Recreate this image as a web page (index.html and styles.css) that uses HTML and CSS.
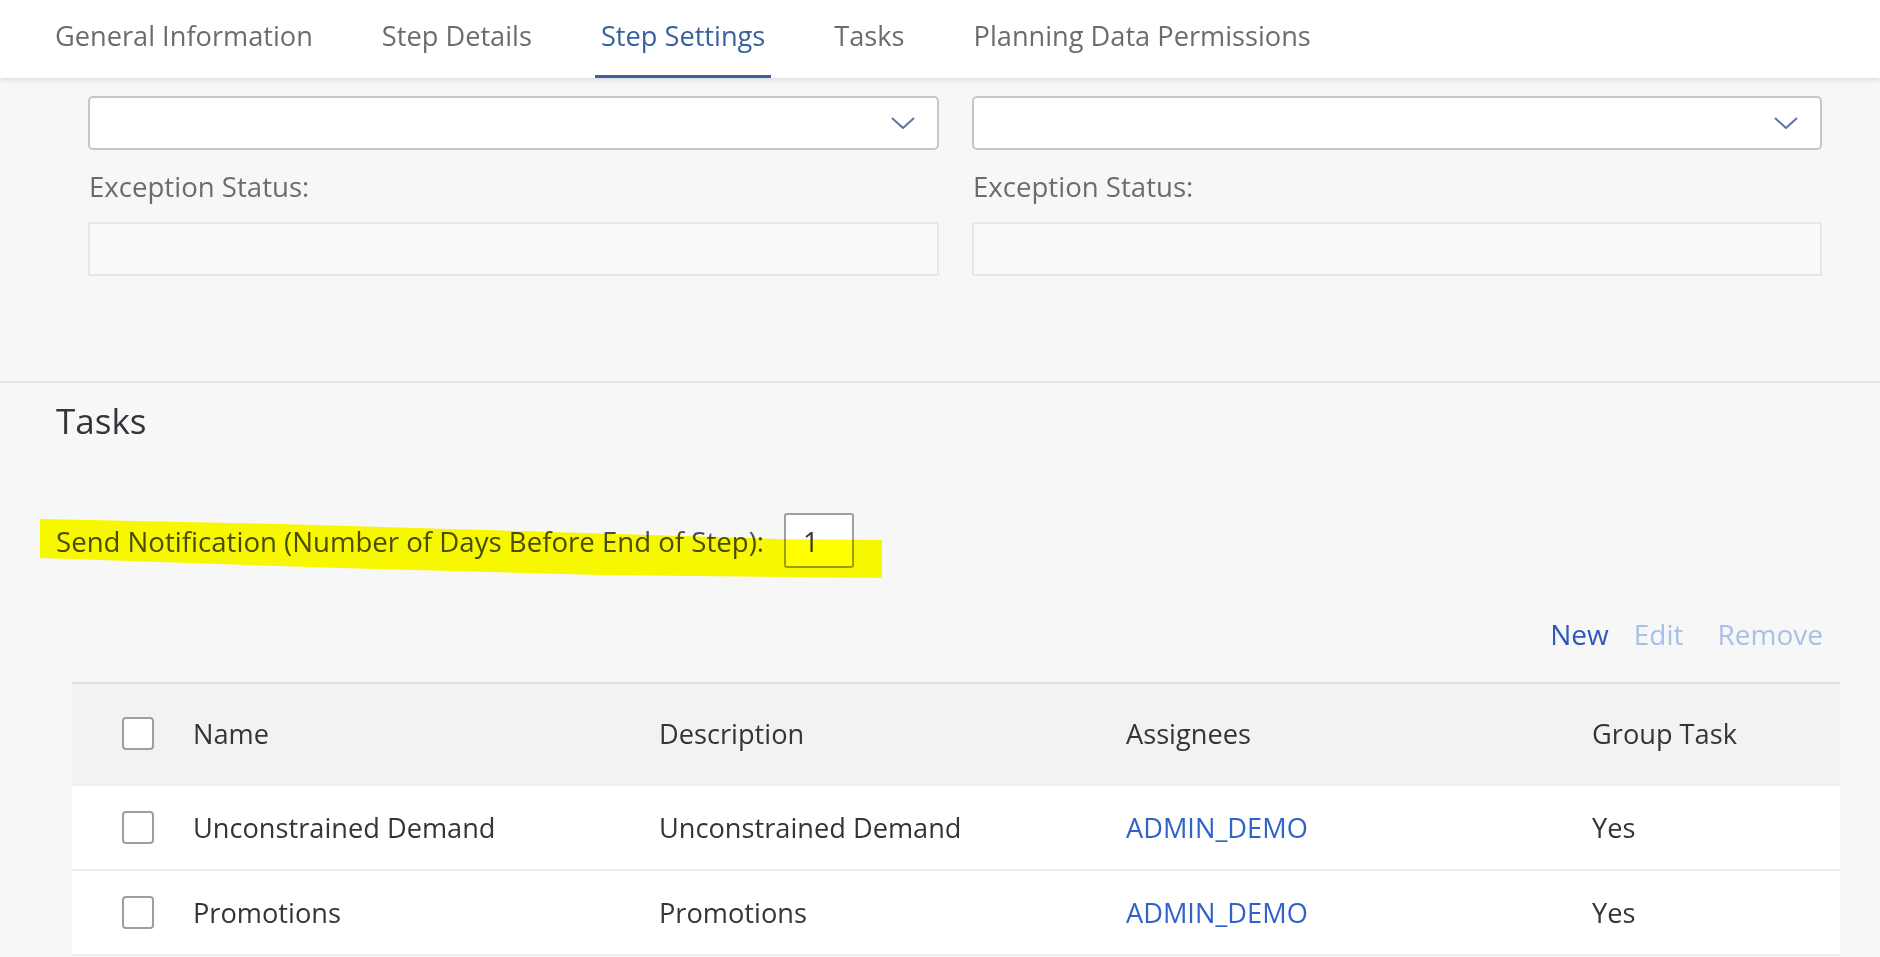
FILE: index.html
```html
<!DOCTYPE html>
<html lang="en">
<head>
<meta charset="utf-8">
<title>Step Settings</title>
<link rel="stylesheet" href="styles.css">
</head>
<body>
<div class="page">
  <header class="tabbar">
    <nav class="tabs">
      <span class="tab">General Information</span>
      <span class="tab">Step Details</span>
      <span class="tab tab-active">Step Settings</span>
      <span class="tab">Tasks</span>
      <span class="tab">Planning Data Permissions</span>
    </nav>
  </header>

  <section class="filters">
    <div class="field-col">
      <div class="select"><svg class="chev" viewBox="0 0 24 12" width="24" height="12"><path d="M1 1 L12 11 L23 1" fill="none" stroke="#5d73a6" stroke-width="2"/></svg></div>
      <label class="label">Exception Status:</label>
      <div class="input-ro"></div>
    </div>
    <div class="field-col">
      <div class="select"><svg class="chev" viewBox="0 0 24 12" width="24" height="12"><path d="M1 1 L12 11 L23 1" fill="none" stroke="#5d73a6" stroke-width="2"/></svg></div>
      <label class="label">Exception Status:</label>
      <div class="input-ro"></div>
    </div>
  </section>

  <section class="tasks">
    <h2 class="title">Tasks</h2>
    <div class="notify">
      <span class="notify-text">Send Notification (Number of Days Before End of Step):</span>
      <span class="num-input">1</span>
      <svg class="highlight" viewBox="0 0 842 70" width="842" height="70"><polygon points="0,6 240,11 480,18 740,26 842,27 842,65 560,62 300,55 0,45" fill="#ffff00"/></svg>
    </div>
    <div class="toolbar">
      <span class="tbtn">New</span>
      <span class="tbtn tbtn-disabled">Edit</span>
      <span class="tbtn tbtn-disabled">Remove</span>
    </div>
    <div class="table">
      <div class="trow thead">
        <div class="cell cell-check"><span class="checkbox"></span></div>
        <div class="cell">Name</div>
        <div class="cell">Description</div>
        <div class="cell">Assignees</div>
        <div class="cell">Group Task</div>
      </div>
      <div class="trow">
        <div class="cell cell-check"><span class="checkbox"></span></div>
        <div class="cell">Unconstrained Demand</div>
        <div class="cell">Unconstrained Demand</div>
        <div class="cell link">ADMIN_DEMO</div>
        <div class="cell">Yes</div>
      </div>
      <div class="trow">
        <div class="cell cell-check"><span class="checkbox"></span></div>
        <div class="cell">Promotions</div>
        <div class="cell">Promotions</div>
        <div class="cell link">ADMIN_DEMO</div>
        <div class="cell">Yes</div>
      </div>
    </div>
  </section>
</div>
</body>
</html>
```

FILE: styles.css
```css
* { box-sizing: border-box; }

html, body {
  margin: 0;
  padding: 0;
}

body {
  width: 1880px;
  height: 957px;
  overflow: hidden;
  background: #f7f7f7;
  font-family: "Open Sans", "Noto Sans", "Liberation Sans", sans-serif;
  font-size: 27.6px;
  color: #32363a;
}

.page {
  position: relative;
  height: 957px;
  overflow: hidden;
}

/* Tab bar */
.tabbar {
  position: relative;
  z-index: 2;
  height: 78px;
  background: #ffffff;
  box-shadow: 0 2px 5px rgba(0, 0, 0, 0.12);
  padding-left: 49px;
}

.tabs {
  display: flex;
  gap: 57px;
  height: 100%;
  font-size: 27.2px;
}

.tab {
  display: flex;
  align-items: center;
  height: 100%;
  padding: 2px 6px 6px;
  color: #6a6d70;
  border-bottom: 3px solid transparent;
}

.tab-active {
  color: #3a619f;
  border-bottom-color: #3a619f;
}

/* Filters */
.filters {
  display: grid;
  grid-template-columns: 851px 850px;
  column-gap: 33px;
  padding: 18px 58px 0 88px;
  height: 305px;
  border-bottom: 2px solid #e3e3e3;
}

.field-col {
  display: flex;
  flex-direction: column;
}

.select {
  height: 54px;
  background: #ffffff;
  border: 2px solid #c3c6cb;
  border-radius: 5px;
  display: flex;
  align-items: center;
  justify-content: flex-end;
  padding-right: 22px;
}

.chev { display: block; }

.label {
  height: 72px;
  display: flex;
  align-items: center;
  color: #6a6d70;
  padding-left: 1px;
}

.input-ro {
  height: 54px;
  background: #fafafa;
  border: 2px solid #e6e6e6;
  border-radius: 2px;
}

/* Tasks */
.tasks {
  padding: 18px 40px 0 56px;
}

.title {
  margin: 0;
  font-size: 35px;
  font-weight: 400;
  line-height: 40px;
  color: #32363a;
}

.notify {
  position: relative;
  display: flex;
  align-items: center;
  margin-top: 72px;
  height: 55px;
}

.notify-text {
  color: #4a4d50;
}

.num-input {
  margin-left: 20px;
  width: 70px;
  height: 55px;
  background: #ffffff;
  border: 2px solid #9aa0a6;
  border-radius: 3px;
  display: flex;
  align-items: center;
  padding-left: 17px;
  color: #32363a;
}

.highlight {
  position: absolute;
  left: -16px;
  top: 0;
  mix-blend-mode: multiply;
  pointer-events: none;
}

.toolbar {
  display: flex;
  justify-content: flex-end;
  align-items: center;
  height: 40px;
  margin-top: 46px;
  padding-right: 17px;
  gap: 25px;
  font-size: 28px;
}

.tbtn {
  color: #2f58bd;
}

.tbtn-disabled {
  color: #a9c0e6;
}

.tbtn-disabled + .tbtn-disabled {
  margin-left: 9px;
}

/* Table */
.table {
  margin-top: 28px;
  margin-left: 16px;
  width: 1768px;
  background: #ffffff;
  border-top: 2px solid #dcdcdc;
  font-size: 27.2px;
}

.trow {
  display: grid;
  grid-template-columns: 121px 466px 467px 466px 1fr;
  align-items: center;
  height: 85px;
  border-bottom: 2px solid #ececec;
  background: #ffffff;
}

.thead {
  height: 102px;
  background: #f2f2f2;
  border-bottom: none;
  padding-bottom: 4px;
}

.cell {
  white-space: nowrap;
  color: #32363a;
}

.cell-check {
  padding-left: 50px;
  display: flex;
  align-items: center;
}

.checkbox {
  display: block;
  width: 32px;
  height: 33px;
  background: #ffffff;
  border: 2px solid #9b9ea3;
  border-radius: 4px;
}

.link {
  color: #2f63c9;
}
```
